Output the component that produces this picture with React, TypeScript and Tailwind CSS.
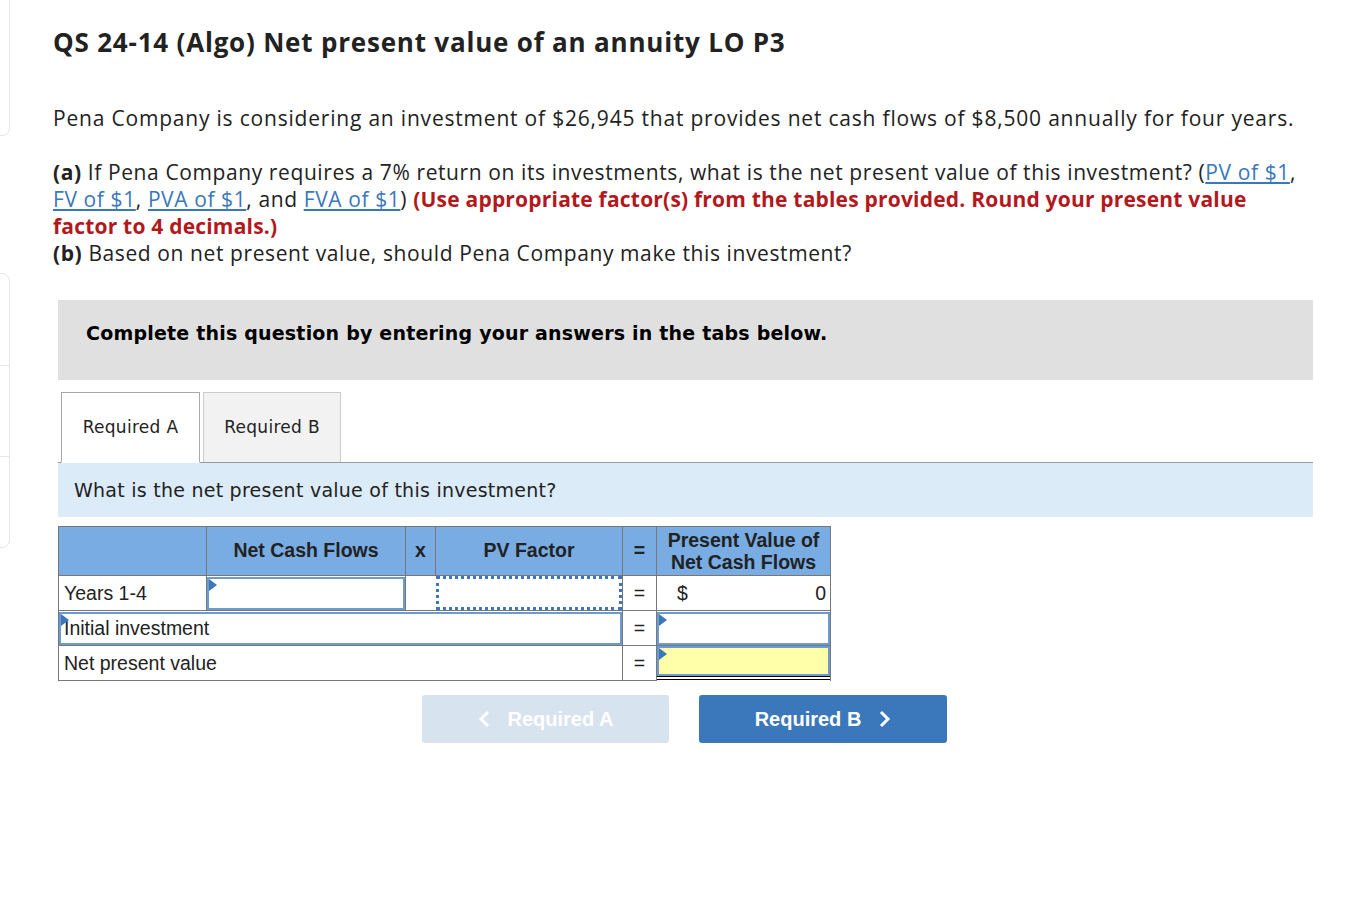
import React from 'react';

const body = { fontFamily: '"Open Sans", Lato, sans-serif' };
const verdana = { fontFamily: '"DejaVu Sans", Verdana, sans-serif' };
const arial = { fontFamily: '"Liberation Sans", Arial, sans-serif' };

function Flag() {
  return (
    <span className="absolute left-0 top-0 h-0 w-0 border-y-[6px] border-l-[8px] border-y-transparent border-l-[#3a77bb]" />
  );
}

function Link({ children }: { children: React.ReactNode }) {
  return <span className="whitespace-nowrap text-[#3a77bb] underline underline-offset-2">{children}</span>;
}

export default function App() {
  return (
    <div className="relative min-h-[911px] bg-white text-[#222]">
      {/* side cards peeking in from the left */}
      <div className="absolute left-[-20px] top-[-10px] h-[146px] w-[30px] rounded-lg border border-[#e6e6e6]" />
      <div className="absolute left-[-20px] top-[273px] flex h-[275px] w-[30px] flex-col rounded-lg border border-[#e6e6e6]">
        <div className="h-[92px] border-b border-[#e6e6e6]" />
        <div className="h-[91px] border-b border-[#e6e6e6]" />
      </div>

      <div className="pl-[53px] pr-[55px] pt-[24px]">
        <h1 className="text-[26px] font-bold leading-[36px] tracking-[0.8px] text-[#222]" style={body}>
          QS 24-14 (Algo) Net present value of an annuity LO P3
        </h1>

        <p className="mt-[45px] text-[21px] leading-[27px] tracking-[0.8px]" style={body}>
          Pena Company is considering an investment of $26,945 that provides net cash flows of $8,500 annually for four years.
        </p>

        <p className="mt-[27px] text-[21px] leading-[27px] tracking-[0.6px]" style={body}>
          <b>(a)</b> If Pena Company requires a 7% return on its investments, what is the net present value of this investment? (
          <Link>PV of $1</Link>, <Link>FV of $1</Link>, <Link>PVA of $1</Link>, and <Link>FVA of $1</Link>){' '}
          <b className="text-[#b3181c] tracking-[0.2px]">
            (Use appropriate factor(s) from the tables provided. Round your present value factor to 4 decimals.)
          </b>
          <br />
          <b>(b)</b> Based on net present value, should Pena Company make this investment?
        </p>

        <div className="ml-[5px] mt-[33px] w-[1255px]">
          <div className="flex h-[80px] items-center bg-[#e0e0e0] pb-[14px] pl-[28px]">
            <span className="text-[19px] font-bold tracking-[0.2px] text-black" style={verdana}>
              Complete this question by entering your answers in the tabs below.
            </span>
          </div>

          <div className="mt-[12px] flex gap-[3px] border-b border-[#999] pl-[3px]" style={verdana}>
            <div className="-mb-px flex h-[71px] w-[139px] items-center justify-center border border-b-white border-[#aaa] bg-white text-[17px] tracking-[0.3px] text-[#222]">
              Required A
            </div>
            <div className="flex h-[70px] w-[138px] items-center justify-center border border-b-0 border-[#ccc] bg-[#f2f2f2] text-[17px] tracking-[0.3px] text-[#222]">
              Required B
            </div>
          </div>

          <div className="flex h-[54px] items-center bg-[#dbebf8] pl-[16px] text-[19px] tracking-[0.25px] text-[#222]" style={verdana}>
            What is the net present value of this investment?
          </div>

          <table className="mt-[9px] border-collapse text-[19.5px] text-[#222]" style={arial}>
            <colgroup>
              <col className="w-[148px]" />
              <col className="w-[199px]" />
              <col className="w-[30px]" />
              <col className="w-[187px]" />
              <col className="w-[34px]" />
              <col className="w-[174px]" />
            </colgroup>
            <thead>
              <tr className="h-[49px] bg-[#78ace3] font-bold">
                <th className="border border-[#777]" />
                <th className="border border-[#777]">Net Cash Flows</th>
                <th className="border border-[#777]">x</th>
                <th className="border border-[#777]">PV Factor</th>
                <th className="border border-[#777]">=</th>
                <th className="border border-[#777] leading-[22px]">
                  Present Value of
                  <br />
                  Net Cash Flows
                </th>
              </tr>
            </thead>
            <tbody className="leading-[22px]">
              <tr className="h-[35px]">
                <td className="border border-[#777] pl-[5px]">Years 1-4</td>
                <td className="border border-[#777] p-0">
                  <div className="relative h-[33px] border-2 border-[#6b9bd1] bg-white">
                    <Flag />
                  </div>
                </td>
                <td className="border-y border-[#777]" />
                <td className="border-y border-[#777] p-0">
                  <div className="h-[34px] border-[3px] border-dotted border-[#3a77bb]" />
                </td>
                <td className="border border-[#777] text-center">=</td>
                <td className="border border-[#777] px-[4px]">
                  <div className="flex justify-between">
                    <span className="pl-[16px]">$</span>
                    <span>0</span>
                  </div>
                </td>
              </tr>
              <tr className="h-[35px]">
                <td colSpan={4} className="border border-[#777] p-0">
                  <div className="relative flex h-[33px] items-center border-2 border-[#6b9bd1] bg-white pl-[3px]">
                    <Flag />
                    Initial investment
                  </div>
                </td>
                <td className="border border-[#777] text-center">=</td>
                <td className="border border-[#777] p-0">
                  <div className="relative h-[33px] border-2 border-[#6b9bd1] bg-white">
                    <Flag />
                  </div>
                </td>
              </tr>
              <tr className="h-[35px]">
                <td colSpan={4} className="border border-[#777] pl-[5px]">Net present value</td>
                <td className="border border-[#777] text-center">=</td>
                <td className="border border-[#777] border-b-0 p-0">
                  <div className="relative h-[30px] border-2 border-[#6b9bd1] bg-[#ffffaa]">
                    <Flag />
                  </div>
                  <div className="h-[4px] border-y border-black" />
                </td>
              </tr>
            </tbody>
          </table>

          <div className="mt-[14px] flex gap-[30px] pl-[364px]" style={arial}>
            <button className="flex h-[48px] w-[247px] items-center justify-center gap-[18px] rounded-[3px] bg-[#d8e3f0] text-[20px] font-bold text-white">
              <svg width="12" height="18" viewBox="0 0 12 18" fill="none" stroke="white" strokeWidth="3">
                <path d="M10 2 L3 9 L10 16" />
              </svg>
              <span>Required A</span>
            </button>
            <button className="flex h-[48px] w-[248px] items-center justify-center gap-[18px] rounded-[3px] bg-[#3a77bb] text-[20px] font-bold text-white">
              <span>Required B</span>
              <svg width="12" height="18" viewBox="0 0 12 18" fill="none" stroke="white" strokeWidth="3">
                <path d="M2 2 L9 9 L2 16" />
              </svg>
            </button>
          </div>
        </div>
      </div>
    </div>
  );
}
